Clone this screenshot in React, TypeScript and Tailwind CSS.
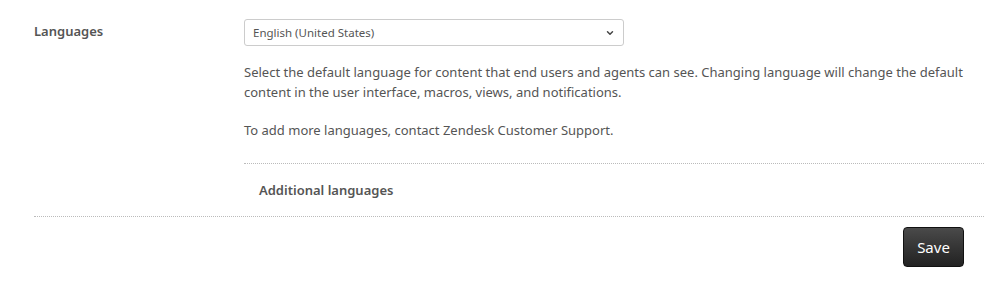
import { ChevronDown } from 'lucide-react'

export default function App() {
  return (
    <div className="w-[1002px] h-[298px] bg-white font-['Noto_Sans',sans-serif] text-[#555]">
      <div className="pl-[34px] pr-[18px] pt-[19px]">
        <div className="flex">
          <div className="w-[210px] pt-[3px] text-[13px] font-semibold text-[#555]">Languages</div>
          <div className="flex-1">
            <div className="relative w-[380px] h-[27px] border border-[#ccc] rounded-[3px] flex items-center pl-[8px] text-[11.5px] text-[#555]">
              English (United States)
              <ChevronDown className="absolute right-[8px] top-[8px] w-[10px] h-[10px] text-[#444]" strokeWidth={3.5} />
            </div>
            <p className="mt-[16px] text-[13px] leading-[20px] text-[#555]">
              Select the default language for content that end users and agents can see. Changing language will change the default content in the user interface, macros, views, and notifications.
            </p>
            <p className="mt-[18px] text-[13px] leading-[20px] text-[#555]">
              To add more languages, contact Zendesk Customer Support.
            </p>
            <div className="mt-[23px] border-t border-dotted border-[#bbb]" />
            <div className="pl-[15px] pt-[17px] pb-[17px] text-[13px] leading-[18px] font-semibold text-[#555]">Additional languages</div>
          </div>
        </div>
        <div className="border-t border-dotted border-[#bbb]" />
        <div className="flex justify-end pr-[20px] pt-[10px]">
          <button className="w-[61px] h-[40px] rounded-[4px] border border-[#111] bg-gradient-to-b from-[#4a4a4a] to-[#222] text-white text-[15px]">
            Save
          </button>
        </div>
      </div>
    </div>
  )
}
